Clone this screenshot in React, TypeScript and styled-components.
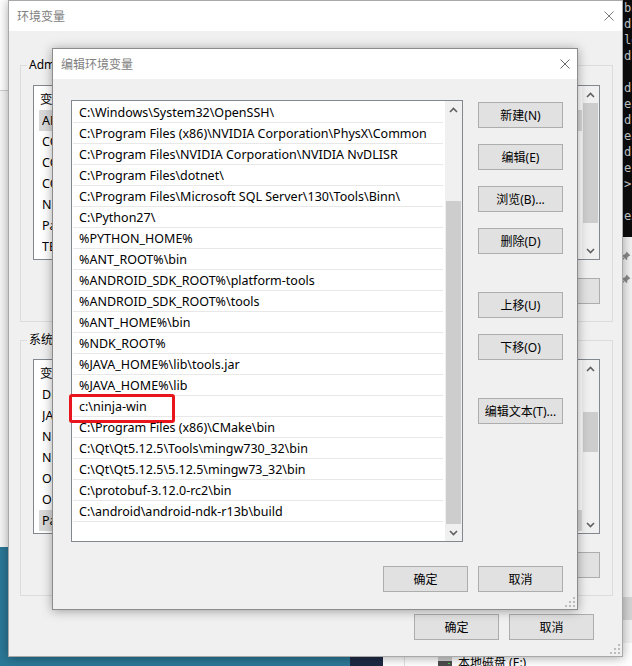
import React from 'react';
import styled, { createGlobalStyle } from 'styled-components';

const UI_FONT = `"Noto Sans", "Noto Sans CJK SC", sans-serif`;

const GlobalStyle = createGlobalStyle`
  html, body {
    margin: 0;
    padding: 0;
    background: #2b7897;
  }
  body {
    font-family: ${UI_FONT};
    font-size: 12px;
    color: #000;
  }
  * {
    box-sizing: border-box;
  }
`;

// --- Desktop and the windows behind the dialogs ---

const Desktop = styled.div`
  position: relative;
  width: 632px;
  height: 666px;
  overflow: hidden;
  background: #2b7897;
`;

const BackWindow = styled.div`
  position: absolute;
  left: 0;
  top: 0;
  width: 320px;
  height: 547px;
  display: flex;
  flex-direction: column;
  background: #f6f6f6;
`;

const BackHeader = styled.div`
  height: 91px;
  flex: none;
  background: #ffffff;
  border-bottom: 1px solid #cfcfcf;
`;

const TaskStrip = styled.div`
  position: absolute;
  left: 350px;
  top: 560px;
  width: 60px;
  height: 106px;
  background: #1e2a45;
`;

const Terminal = styled.div`
  position: absolute;
  left: 623px;
  top: 0;
  width: 200px;
  height: 237px;
  padding-left: 1px;
  background: #0c0c0c;
  color: #cccccc;
  font-family: "DejaVu Sans Mono", "Liberation Mono", monospace;
  font-size: 12px;
  line-height: 16px;
  white-space: pre;
`;

const Explorer = styled.div`
  position: absolute;
  left: 383px;
  top: 237px;
  width: 270px;
  height: 440px;
  display: flex;
  background: #ffffff;
`;

const ExplorerGutter = styled.div`
  width: 22px;
  flex: none;
  border-right: 1px solid #e3e3e3;
`;

const NavPane = styled.div`
  flex: 1;
  display: flex;
  flex-direction: column;
`;

const NavSection = styled.div<{ $white?: boolean; $gap: number }>`
  display: flex;
  flex-direction: column;
  padding-top: ${p => p.$gap}px;
  background: ${p => (p.$white ? '#ffffff' : '#f2f2f2')};
`;

const NavItem = styled.div<{ $selected?: boolean }>`
  height: 23px;
  flex: none;
  display: flex;
  align-items: center;
  gap: 6px;
  padding: 0 22px 0 33px;
  background: ${p => (p.$selected ? '#d6d6d6' : 'transparent')};
  white-space: nowrap;
`;

const PinMark = styled.svg`
  margin-left: auto;
  flex: none;
`;

// --- Dialog chrome ---

const Dialog = styled.div<{ $active?: boolean }>`
  position: absolute;
  display: flex;
  flex-direction: column;
  background: #f0f0f0;
  border: 1px solid ${p => (p.$active ? '#8c8c8c' : '#a8a8a8')};
  box-shadow: 0 1px 10px rgba(0, 0, 0, 0.35);
`;

const EnvWindow = styled(Dialog)`
  left: 8px;
  top: 0;
  width: 615px;
  height: 657px;
`;

const EditWindow = styled(Dialog)`
  left: 52px;
  top: 48px;
  width: 526px;
  height: 562px;
`;

const TitleBar = styled.div<{ $inset: number }>`
  height: 30px;
  flex: none;
  display: flex;
  align-items: center;
  justify-content: space-between;
  padding: 0 ${p => p.$inset}px 0 8px;
  background: #ffffff;
  color: #808080;
  font-size: 12px;
`;

const Grip = styled.svg`
  position: absolute;
  right: 2px;
  bottom: 2px;
`;

const Button = styled.button<{ $spaced?: boolean }>`
  width: 85px;
  height: 26px;
  flex: none;
  margin-top: ${p => (p.$spaced ? '22px' : '0')};
  padding: 0;
  border: 1px solid #adadad;
  background: #e1e1e1;
  color: #000;
  font-family: ${UI_FONT};
  font-size: 12px;
  white-space: nowrap;
`;

const ButtonRow = styled.div<{ $top: number; $right?: number }>`
  display: flex;
  justify-content: flex-end;
  gap: 10px;
  margin-top: ${p => p.$top}px;
  padding-right: ${p => p.$right ?? 0}px;
`;

// --- Scroll bars ---

const ScrollBar = styled.div`
  width: 17px;
  flex: none;
  display: flex;
  flex-direction: column;
  background: #f0f0f0;
`;

const ScrollArrow = styled.div`
  height: 17px;
  flex: none;
  display: flex;
  align-items: center;
  justify-content: center;
`;

const ScrollTrack = styled.div`
  flex: 1;
  padding: 0 1px;
`;

const ScrollThumb = styled.div<{ $offset: number; $size: number }>`
  margin-top: ${p => p.$offset}px;
  height: ${p => p.$size}px;
  background: #cdcdcd;
`;

// --- Outer dialog: variable groups ---

const EnvBody = styled.div`
  flex: 1;
  display: flex;
  flex-direction: column;
  padding: 26px 9px 0 11px;
`;

const GroupBox = styled.fieldset<{ $first?: boolean }>`
  margin: ${p => (p.$first ? '0' : '10px')} 0 0 0;
  padding: ${p => (p.$first ? '12px' : '11px')} 12px 17px 12px;
  border: 1px solid #dcdcdc;
  min-width: 0;
`;

const GroupLegend = styled.legend`
  margin-left: -6px;
  padding: 0 2px;
  line-height: 16px;
  font-size: 12px;
`;

const VarList = styled.div`
  height: 175px;
  display: flex;
  background: #ffffff;
  border: 1px solid #828790;
  font-size: 12.5px;
`;

const VarTable = styled.div`
  flex: 1;
  min-width: 0;
  display: flex;
  flex-direction: column;
  overflow: hidden;
`;

const VarHeader = styled.div`
  height: 24px;
  flex: none;
  display: flex;
  align-items: center;
  padding-left: 6px;
`;

const VarRow = styled.div<{ $selected?: boolean }>`
  height: 21px;
  flex: none;
  display: flex;
  align-items: center;
  margin-left: 5px;
  padding-left: 3px;
  background: ${p => (p.$selected ? '#d9d9d9' : 'transparent')};
`;

const NameCell = styled.span`
  width: 168px;
  flex: none;
  overflow: hidden;
  white-space: nowrap;
`;

const ValueCell = styled.span`
  width: 340px;
  flex: none;
  overflow: hidden;
  white-space: nowrap;
  text-overflow: ellipsis;
`;

// --- Inner dialog: path editor ---

const EditBody = styled.div`
  flex: 1;
  display: flex;
  flex-direction: column;
  padding: 21px 14px 17px 18px;
`;

const EditMain = styled.div`
  height: 442px;
  display: flex;
  gap: 15px;
`;

const PathList = styled.div`
  width: 392px;
  display: flex;
  background: #ffffff;
  border: 1px solid #828790;
`;

const PathRows = styled.div`
  flex: 1;
  display: flex;
  flex-direction: column;
  padding: 1px 2px 0 1px;
`;

const PathRow = styled.div`
  position: relative;
  height: 21px;
  flex: none;
  display: flex;
  align-items: center;
  padding-left: 6px;
  border-bottom: 1px solid #e8e8e8;
  font-size: 12.5px;
  white-space: nowrap;
`;

const RedMark = styled.span`
  position: absolute;
  left: -4px;
  top: -2px;
  width: 106px;
  height: 29px;
  border: 3px solid #e8161c;
  border-radius: 3px;
`;

const ButtonStack = styled.div`
  display: flex;
  flex-direction: column;
  gap: 16px;
  padding-top: 2px;
`;

// --- Small drawings ---

function Chevron({ down }: { down?: boolean }) {
  return (
    <svg width="9" height="6" viewBox="0 0 9 6">
      <polyline
        points={down ? '1,1 4.5,4.5 8,1' : '1,5 4.5,1.5 8,5'}
        fill="none"
        stroke="#606060"
        strokeWidth="1.6"
      />
    </svg>
  );
}

function CloseGlyph({ color }: { color: string }) {
  return (
    <svg width="10" height="10" viewBox="0 0 10 10">
      <path d="M0.5 0.5 L9.5 9.5 M9.5 0.5 L0.5 9.5" stroke={color} strokeWidth="1" />
    </svg>
  );
}

function SizeGrip() {
  const dots = [[8, 0], [4, 4], [8, 4], [0, 8], [4, 8], [8, 8]];
  return (
    <Grip width="10" height="10" viewBox="0 0 10 10">
      {dots.map(([x, y]) => (
        <rect key={`${x}-${y}`} x={x} y={y} width="2" height="2" fill="#bcbcbc" />
      ))}
    </Grip>
  );
}

function Pin() {
  return (
    <PinMark width="10" height="10" viewBox="0 0 10 10">
      <path d="M5.5 0.5 L9.5 4.5 L8 5 L6 7 L6.5 8.5 L5.5 9 L1 4.5 L1.5 3.5 L3 4 L5 2 Z" fill="#8a8a8a" />
      <path d="M3 7 L0.5 9.5" stroke="#8a8a8a" strokeWidth="1.2" />
    </PinMark>
  );
}

function Drive() {
  return (
    <svg width="14" height="9" viewBox="0 0 14 9">
      <rect x="0" y="0" width="14" height="4" fill="#cfcfcf" />
      <rect x="0" y="4" width="14" height="5" fill="#4d4d4d" />
      <rect x="10" y="6" width="2" height="1" fill="#3fd13f" />
    </svg>
  );
}

function Scroller({ offset, size }: { offset: number; size: number }) {
  return (
    <ScrollBar>
      <ScrollArrow><Chevron /></ScrollArrow>
      <ScrollTrack>
        <ScrollThumb $offset={offset} $size={size} />
      </ScrollTrack>
      <ScrollArrow><Chevron down /></ScrollArrow>
    </ScrollBar>
  );
}

// --- Data ---

const terminalLines = ['basic', 'dir', 'lex', 'dir', '', 'dir', 'ease', 'dir', 'ease', 'dir', 'err', '>', '', 'exit'];

const userVars: [string, string][] = [
  ['ANT_ROOT', 'C:\\apache-ant-1.9.14\\bin'],
  ['COCOS_CONSOLE_ROOT', 'C:\\cocos2d-x\\tools\\cocos2d-console\\bin'],
  ['COCOS_TEMPLATES_ROOT', 'C:\\cocos2d-x\\templates'],
  ['COCOS_X_ROOT', 'C:\\'],
  ['NDK_ROOT', 'C:\\android\\android-ndk-r13b'],
  ['Path', 'C:\\Users\\Administrator\\AppData\\Local\\Microsoft\\WindowsApps;'],
  ['TEMP', '%USERPROFILE%\\AppData\\Local\\Temp'],
  ['TMP', '%USERPROFILE%\\AppData\\Local\\Temp'],
];

const systemVars: [string, string][] = [
  ['DriverData', 'C:\\Windows\\System32\\Drivers\\DriverData'],
  ['JAVA_HOME', 'C:\\Program Files\\Java\\jdk1.8.0_221'],
  ['NDK_HOME', 'C:\\android\\android-ndk-r13b'],
  ['NUMBER_OF_PROCESSORS', '8'],
  ['OPENCV_DIR', 'C:\\opencv\\build'],
  ['OS', 'Windows_NT'],
  ['Path', 'C:\\Windows\\System32\\OpenSSH\\;C:\\Program Files (x86)\\NVIDIA'],
];

const paths = [
  'C:\\Windows\\System32\\OpenSSH\\',
  'C:\\Program Files (x86)\\NVIDIA Corporation\\PhysX\\Common',
  'C:\\Program Files\\NVIDIA Corporation\\NVIDIA NvDLISR',
  'C:\\Program Files\\dotnet\\',
  'C:\\Program Files\\Microsoft SQL Server\\130\\Tools\\Binn\\',
  'C:\\Python27\\',
  '%PYTHON_HOME%',
  '%ANT_ROOT%\\bin',
  '%ANDROID_SDK_ROOT%\\platform-tools',
  '%ANDROID_SDK_ROOT%\\tools',
  '%ANT_HOME%\\bin',
  '%NDK_ROOT%',
  '%JAVA_HOME%\\lib\\tools.jar',
  '%JAVA_HOME%\\lib',
  'c:\\ninja-win',
  'C:\\Program Files (x86)\\CMake\\bin',
  'C:\\Qt\\Qt5.12.5\\Tools\\mingw730_32\\bin',
  'C:\\Qt\\Qt5.12.5\\5.12.5\\mingw73_32\\bin',
  'C:\\protobuf-3.12.0-rc2\\bin',
  'C:\\android\\android-ndk-r13b\\build',
];

const navFolders = ['3D 对象', '视频', '图片', '文档', '下载', '音乐', '桌面', '本地磁盘 (C:)', '软件 (D:)', '文档 (F:)', '网络', '家庭组', 'OneDrive'];

// --- Pieces ---

function VarGroup({
  title,
  rows,
  selected,
  thumb,
  buttons,
  first,
}: {
  title: string;
  rows: [string, string][];
  selected: number;
  thumb: [number, number];
  buttons: string[];
  first?: boolean;
}) {
  return (
    <GroupBox $first={first}>
      <GroupLegend>{title}</GroupLegend>
      <VarList>
        <VarTable>
          <VarHeader>
            <NameCell>变量</NameCell>
            <ValueCell>值</ValueCell>
          </VarHeader>
          {rows.map(([name, value], i) => (
            <VarRow key={name + i} $selected={i === selected}>
              <NameCell>{name}</NameCell>
              <ValueCell>{value}</ValueCell>
            </VarRow>
          ))}
        </VarTable>
        <Scroller offset={thumb[0]} size={thumb[1]} />
      </VarList>
      <ButtonRow $top={18}>
        {buttons.map(b => (
          <Button key={b}>{b}</Button>
        ))}
      </ButtonRow>
    </GroupBox>
  );
}

export default function App() {
  return (
    <Desktop>
      <GlobalStyle />

      <BackWindow>
        <BackHeader />
      </BackWindow>
      <TaskStrip />

      <Terminal>
        {terminalLines.map((line, i) => (
          <div key={i}>{line || ' '}</div>
        ))}
      </Terminal>

      <Explorer>
        <ExplorerGutter />
        <NavPane>
          <NavSection $gap={7}>
            <NavItem>桌面<Pin /></NavItem>
            <NavItem>下载<Pin /></NavItem>
          </NavSection>
          <NavSection $gap={8}>
            {navFolders.map(name => (
              <NavItem key={name}>{name}</NavItem>
            ))}
            <NavItem $selected>此电脑</NavItem>
            <NavItem>库</NavItem>
          </NavSection>
          <NavSection $white $gap={7}>
            <NavItem>
              <Drive />
              本地磁盘 (E:)
            </NavItem>
          </NavSection>
        </NavPane>
      </Explorer>

      <EnvWindow>
        <TitleBar $inset={8}>
          <span>环境变量</span>
          <CloseGlyph color="#7a7a7a" />
        </TitleBar>
        <EnvBody>
          <VarGroup
            first
            title="Administrator 的用户变量(U)"
            rows={userVars}
            selected={0}
            thumb={[0, 120]}
            buttons={['新建(N)...', '编辑(E)...', '删除(D)']}
          />
          <VarGroup
            title="系统变量(S)"
            rows={systemVars}
            selected={6}
            thumb={[35, 40]}
            buttons={['新建(W)...', '编辑(I)...', '删除(L)']}
          />
          <ButtonRow $top={18} $right={19}>
            <Button>确定</Button>
            <Button>取消</Button>
          </ButtonRow>
        </EnvBody>
        <SizeGrip />
      </EnvWindow>

      <EditWindow $active>
        <TitleBar $inset={7}>
          <span>编辑环境变量</span>
          <CloseGlyph color="#6a6a6a" />
        </TitleBar>
        <EditBody>
          <EditMain>
            <PathList>
              <PathRows>
                {paths.map(p => (
                  <PathRow key={p}>
                    {p}
                    {p === 'c:\\ninja-win' && <RedMark />}
                  </PathRow>
                ))}
              </PathRows>
              <Scroller offset={83} size={323} />
            </PathList>
            <ButtonStack>
              <Button>新建(N)</Button>
              <Button>编辑(E)</Button>
              <Button>浏览(B)...</Button>
              <Button>删除(D)</Button>
              <Button $spaced>上移(U)</Button>
              <Button>下移(O)</Button>
              <Button $spaced>编辑文本(T)...</Button>
            </ButtonStack>
          </EditMain>
          <ButtonRow $top={24}>
            <Button>确定</Button>
            <Button>取消</Button>
          </ButtonRow>
        </EditBody>
        <SizeGrip />
      </EditWindow>
    </Desktop>
  );
}
